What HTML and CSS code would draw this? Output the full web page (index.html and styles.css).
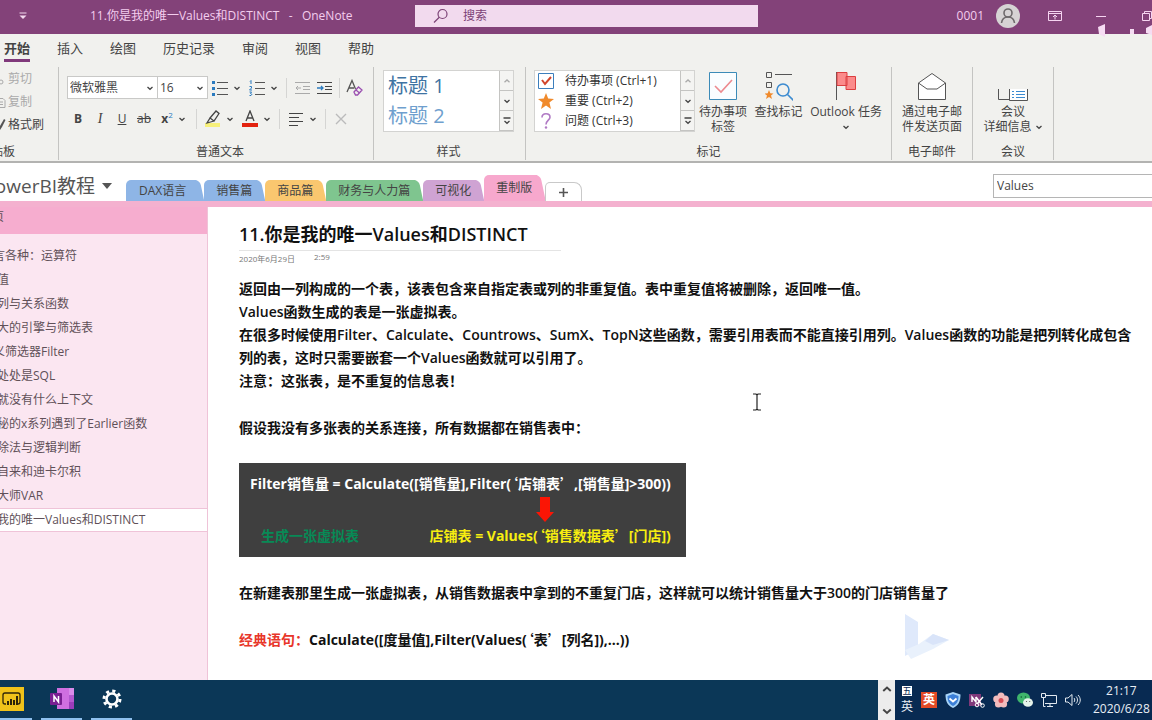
FILE: index.html
```html
<!DOCTYPE html>
<html lang="zh-CN">
<head>
    <meta charset="UTF-8">
    <meta name="viewport" content="width=device-width, initial-scale=1.0">
    <title>11.你是我的唯一Values和DISTINCT - OneNote</title>
    <link rel="stylesheet" href="styles.css">
</head>
<body>

    <!-- Shared icons -->
    <svg class="sprite" width="0" height="0" aria-hidden="true">
        <symbol id="chev" viewBox="0 0 8 8"><path d="M1.500 3 4 5.300 6.500 3" fill="none" stroke="currentColor" stroke-width="1.300"/></symbol>
        <symbol id="chev-up" viewBox="0 0 8 8"><path d="M1.500 5.300 4 3 6.500 5.300" fill="none" stroke="currentColor" stroke-width="1.300"/></symbol>
        <symbol id="more" viewBox="0 0 8 8"><path d="M.5 1h7M1.500 4 4 6.300 6.500 4" fill="none" stroke="currentColor" stroke-width="1.300"/></symbol>
    </svg>

    <header class="titlebar">
        <button class="quick" aria-label="自定义快速访问工具栏">
            <svg width="10" height="8" viewBox="0 0 10 8"><path d="M1.500 1h7" stroke="#f3d9ef"/><path d="M1.500 3.500h7L5 7z" fill="#f3d9ef"/></svg>
        </button>
        <div class="doc-name">11.你是我的唯一Values和DISTINCT &nbsp;&nbsp;-&nbsp;&nbsp; OneNote</div>
        <label class="search">
            <svg width="16" height="16" viewBox="0 0 16 16" fill="none" stroke="#7c4276" stroke-width="1.200"><circle cx="9.500" cy="6" r="4.500"/><path d="M6.300 9.300 1 14.500"/></svg>
            <input type="text" placeholder="搜索" aria-label="搜索">
        </label>
        <div class="account">
            <span>0001</span>
            <svg width="24" height="24" viewBox="0 0 24 24"><circle cx="12" cy="12" r="12" fill="#d6d3d4"/><g fill="none" stroke="#6d696b" stroke-width="1.600"><circle cx="12" cy="9" r="4"/><path d="M5.500 19c.5-4 3-6 6.500-6s6 2 6.500 6"/></g></svg>
        </div>
        <div class="win-buttons">
            <button aria-label="功能区显示选项"><svg width="14" height="12" viewBox="0 0 14 12" fill="none" stroke="#f6d4f1"><path d="M.5 1.500h13v9H.5zM.5 3.500h13M7 9.500V5M5 7l2-2 2 2"/></svg></button>
            <button aria-label="最小化"><svg width="12" height="12" viewBox="0 0 12 12" fill="none" stroke="#f6d4f1"><path d="M1 6.500h10"/></svg></button>
            <button aria-label="还原"><svg width="12" height="12" viewBox="0 0 12 12" fill="none" stroke="#f6d4f1"><path d="M1.500 3.500h7v7h-7zM3.500 3V1.500h7v7H9"/></svg></button>
        </div>
        <svg class="stamp" width="54" height="14" viewBox="0 0 54 14" fill="#f6dcf3"><path d="M0 3 7 0v13l-6-3zM32 5h4v5h-4zM48 4l6-3v10l-6-2z"/></svg>
    </header>

    <nav class="menu">
        <a href="#" class="active">开始</a>
        <a href="#">插入</a>
        <a href="#">绘图</a>
        <a href="#">历史记录</a>
        <a href="#">审阅</a>
        <a href="#">视图</a>
        <a href="#">帮助</a>
    </nav>

    <section class="ribbon">
        <div class="group clipboard">
            <div class="tools">
                <button disabled><svg width="6" height="14" viewBox="0 0 6 14"><circle cx="1" cy="10" r="2" fill="none" stroke="#aaa"/></svg>剪切</button>
                <button disabled><svg width="6" height="14" viewBox="0 0 6 14" fill="none" stroke="#aaa"><path d="M0 3.500h3l2 2v7H0M0 7h3M0 9.500h3"/></svg>复制</button>
                <button><svg width="6" height="14" viewBox="0 0 6 14"><path d="M0 8 4 1l1.500 1L2 9l-2 3z" fill="#555"/></svg>格式刷</button>
            </div>
            <div class="caption">剪贴板</div>
        </div>

        <div class="group font">
            <div class="tools">
                <div class="row">
                    <span class="picker family"><select aria-label="字体"><option>微软雅黑</option></select><svg width="8" height="8"><use href="#chev"/></svg></span>
                    <span class="picker size"><select aria-label="字号"><option>16</option></select><svg width="8" height="8"><use href="#chev"/></svg></span>
                    <button class="split" aria-label="项目符号">
                        <svg width="16" height="16" viewBox="0 0 16 16"><path d="M5 2.500h11M5 8.500h11M5 14.500h11" stroke="#555"/><path d="M0 1h3v3H0zM0 7h3v3H0zM0 13h3v3H0z" fill="#2b7bbf"/></svg>
                        <svg width="8" height="8"><use href="#chev"/></svg>
                    </button>
                    <button class="split" aria-label="编号">
                        <svg width="16" height="16" viewBox="0 0 16 16" fill="none"><path d="M6 2.500h10M6 8.500h10M6 14.500h10" stroke="#555"/><path d="M1 1.500 2 .5V4M.5 6.500h2v1.500L.5 10h2.500M.5 12h2l-1 1.500 1.500 1-1 1H.5" stroke="#2b7bbf"/></svg>
                        <svg width="8" height="8"><use href="#chev"/></svg>
                    </button>
                    <i class="rule"></i>
                    <button class="tool" aria-label="减少缩进" disabled><svg width="15" height="14" viewBox="0 0 15 14" fill="none" stroke="#aaa"><path d="M0 1.500h15M8 5.500h7M8 8.500h7M0 12.500h15M6 7H1M3 5 1 7l2 2"/></svg></button>
                    <button class="tool" aria-label="增加缩进"><svg width="15" height="14" viewBox="0 0 15 14" fill="none" stroke="#444"><path d="M0 1.500h15M8 5.500h7M8 8.500h7M0 12.500h15"/><path d="M0 7h6M4 5l2 2-2 2" stroke="#2b7bbf" stroke-width="1.300"/></svg></button>
                    <i class="rule"></i>
                    <button class="tool" aria-label="清除格式"><svg width="18" height="18" viewBox="0 0 18 18" fill="none"><path d="M1 13 6 1.500 9.500 10M3 9h5" stroke="#555" stroke-width="1.300"/><path d="m8 13 4.500-5L16 11l-4.500 5H9.500zM10 11l3.500 3" stroke="#9a4fb0" stroke-width="1.300"/></svg></button>
                </div>
                <div class="row">
                    <button class="tool"><b>B</b></button>
                    <button class="tool"><em>I</em></button>
                    <button class="tool"><u>U</u></button>
                    <button class="tool"><s>ab</s></button>
                    <button class="split"><span><b>x</b><sup>2</sup></span><svg width="8" height="8"><use href="#chev"/></svg></button>
                    <i class="rule"></i>
                    <button class="split" aria-label="突出显示">
                        <svg width="16" height="18" viewBox="0 0 16 18"><path d="M0 13h15v4H0z" fill="#f7f07a"/><path d="m5 8 6-7 3 2.500L9 11zM5 8l-3 5 7-2" fill="none" stroke="#444" stroke-width="1.300"/></svg>
                        <svg width="8" height="8"><use href="#chev"/></svg>
                    </button>
                    <button class="split" aria-label="字体颜色">
                        <svg width="16" height="18" viewBox="0 0 16 18"><path d="M0 13h16v4H0z" fill="#e3230f"/><path d="M4 11 8 1l4 10M5.500 8h5" fill="none" stroke="#444" stroke-width="1.300"/></svg>
                        <svg width="8" height="8"><use href="#chev"/></svg>
                    </button>
                    <i class="rule"></i>
                    <button class="split" aria-label="段落对齐">
                        <svg width="15" height="14" viewBox="0 0 15 14" stroke="#444"><path d="M0 1.500h14M0 5.500h10M0 9.500h14M0 13.500h9"/></svg>
                        <svg width="8" height="8"><use href="#chev"/></svg>
                    </button>
                    <i class="rule"></i>
                    <button class="tool" aria-label="删除" disabled><svg width="12" height="12" viewBox="0 0 12 12" stroke="#bbb" stroke-width="1.400"><path d="m1 1 10 10M11 1 1 11"/></svg></button>
                </div>
            </div>
            <div class="caption">普通文本</div>
        </div>

        <div class="group styles">
            <div class="gallery">
                <div class="choices">
                    <button class="h1">标题 1</button>
                    <button class="h2">标题 2</button>
                </div>
                <div class="scroller">
                    <button aria-label="上一行" disabled><svg width="8" height="8"><use href="#chev-up"/></svg></button>
                    <button aria-label="下一行"><svg width="8" height="8"><use href="#chev"/></svg></button>
                    <button aria-label="更多"><svg width="8" height="8"><use href="#more"/></svg></button>
                </div>
            </div>
            <div class="caption">样式</div>
        </div>

        <div class="group tags">
            <div class="tools">
                <div class="gallery">
                    <div class="choices">
                        <button><svg width="16" height="16" viewBox="0 0 16 16" fill="none"><path d="M.5.5h15v15H.5z" fill="#fff" stroke="#3c7ebc"/><path d="m4 7 3 4 6-7" stroke="#d2452a" stroke-width="2"/></svg>待办事项 (Ctrl+1)</button>
                        <button><svg width="16" height="16" viewBox="0 0 16 16"><path d="m8 0 2.200 5.600 5.800.3-4.600 3.700L13 16l-5-3.500L3 16l1.600-6.400L0 5.900l5.800-.3z" fill="#f08a2c"/></svg>重要 (Ctrl+2)</button>
                        <button><svg width="16" height="16" viewBox="0 0 16 16"><path d="M4 4.500C4 2 5.500.8 8 .8s4 1.200 4 3.400C12 7 8 7.500 8 11.500" fill="none" stroke="#b07ac4" stroke-width="1.600"/><circle cx="8" cy="14.500" r="1.200" fill="#b07ac4"/></svg>问题 (Ctrl+3)</button>
                    </div>
                    <div class="scroller">
                        <button aria-label="上一行" disabled><svg width="8" height="8"><use href="#chev-up"/></svg></button>
                        <button aria-label="下一行"><svg width="8" height="8"><use href="#chev"/></svg></button>
                        <button aria-label="更多"><svg width="8" height="8"><use href="#more"/></svg></button>
                    </div>
                </div>
                <div class="tag-buttons">
                    <button class="big"><svg width="28" height="30" viewBox="0 0 28 30" fill="none"><path d="M.5 1.500h27v27H.5z" fill="#fafdff" stroke="#3c8bb8"/><path d="m6 15 6 6L23 9" stroke="#ec8a8f" stroke-width="1.600"/></svg>待办事项<br>标签</button>
                    <button class="big"><svg width="28" height="30" viewBox="0 0 28 30" fill="none"><path d="M1.500 1.500h5v5h-5zM1.500 11.500h5v5h-5zM10 3.500h17" stroke="#555"/><path d="m4 19 1.300 3.200 3.200.3-2.500 2 1 3.500-3-2-3 2 1-3.500-2.500-2 3.200-.3z" fill="#f08a2c"/><circle cx="18" cy="19" r="6" stroke="#3c8bd0" stroke-width="1.600"/><path d="m22.500 23.500 6 6" stroke="#3c8bd0" stroke-width="1.600"/></svg>查找标记</button>
                    <button class="big"><svg width="22" height="30" viewBox="0 0 22 30"><path d="M1.500 1v28" stroke="#555"/><path d="M2 1.500h10v13H2zM11 5.500h9.500v13H11z" fill="#fb8b8b" stroke="#dc3f40"/></svg>Outlook 任务<svg width="8" height="16" viewBox="0 0 8 8"><use href="#chev"/></svg></button>
                </div>
            </div>
            <div class="caption">标记</div>
        </div>

        <div class="group mail">
            <div class="tools">
                <button class="big"><svg width="30" height="30" viewBox="0 0 30 30" fill="#fff" stroke="#555"><path d="M1.500 12 15 2.500 28.500 12v16.500h-27z"/><path d="m1.500 12 8.500 6h10l8.500-6" fill="none"/></svg>通过电子邮<br>件发送页面</button>
            </div>
            <div class="caption">电子邮件</div>
        </div>

        <div class="group meeting">
            <div class="tools">
                <button class="big"><svg width="30" height="30" viewBox="0 0 30 30" fill="none" stroke="#555"><path d="M.5 18v10.500H11"/><path d="M11.500 18v11.500h18V18" fill="#fff"/><path d="M14 20.500h2M14 23.500h2M14 26.500h2M18 20.500h9M18 23.500h9M18 26.500h9" stroke="#3c8bd0"/></svg>会议<br><span>详细信息 <svg width="8" height="8"><use href="#chev"/></svg></span></button>
            </div>
            <div class="caption">会议</div>
        </div>
    </section>

    <div class="sections">
        <button class="notebook"><span>PowerBI教程</span><svg width="10" height="6" viewBox="0 0 10 6"><path d="M0 0h10L5 6z" fill="#555"/></svg></button>
        <nav class="tabs">
            <a href="#" class="blue">DAX语言</a>
            <a href="#" class="blue">销售篇</a>
            <a href="#" class="orange">商品篇</a>
            <a href="#" class="green">财务与人力篇</a>
            <a href="#" class="purple">可视化</a>
            <a href="#" class="pink current">重制版</a>
            <button class="add" aria-label="新建分区"><svg width="9" height="9" viewBox="0 0 9 9" stroke="#555" stroke-width="1.600"><path d="M4.500 0v9M0 4.500h9"/></svg></button>
        </nav>
        <input class="find" type="text" value="Values" aria-label="搜索笔记">
    </div>

    <main class="workspace">
        <aside class="pages">
            <div class="pages-head">页</div>
            <ul>
                <li class="deep"><a href="#">言各种：运算符</a></li>
                <li><a href="#">值</a></li>
                <li><a href="#">列与关系函数</a></li>
                <li><a href="#">大的引擎与筛选表</a></li>
                <li class="deep"><a href="#">义筛选器Filter</a></li>
                <li><a href="#">处处是SQL</a></li>
                <li><a href="#">就没有什么上下文</a></li>
                <li><a href="#">秘的x系列遇到了Earlier函数</a></li>
                <li><a href="#">除法与逻辑判断</a></li>
                <li><a href="#">自来和迪卡尔积</a></li>
                <li><a href="#">大师VAR</a></li>
                <li class="selected"><a href="#">我的唯一Values和DISTINCT</a></li>
            </ul>
        </aside>

        <article class="note">
            <h1>11.你是我的唯一Values和DISTINCT</h1>
            <div class="stamp-row"><span>2020年6月29日</span><time>2:59</time></div>

            <p>返回由一列构成的一个表，该表包含来自指定表或列的非重复值。表中重复值将被删除，返回唯一值。</p>
            <p>Values函数生成的表是一张虚拟表。</p>
            <p>在很多时候使用Filter、Calculate、Countrows、SumX、TopN这些函数，需要引用表而不能直接引用列。Values函数的功能是把列转化成包含<br>列的表，这时只需要嵌套一个Values函数就可以引用了。</p>
            <p>注意：这张表，是不重复的信息表！</p>
            <p class="spaced">假设我没有多张表的关系连接，所有数据都在销售表中：</p>

            <div class="formula">
                <div>Filter销售量 = Calculate([销售量],Filter(<span class="han">‘店铺表’</span>,[销售量]&gt;300))</div>
                <svg width="20" height="25" viewBox="0 0 20 25"><path d="M5 0h10v15h4l-9 10-9-10h4z" fill="#fb1505"/></svg>
                <div class="second">
                    <span class="green-text">生成一张虚拟表</span>
                    <span class="yellow-text">店铺表 = Values(<span class="han">‘销售数据表’</span>[门店])</span>
                </div>
            </div>

            <p class="spaced">在新建表那里生成一张虚拟表，从销售数据表中拿到的不重复门店，这样就可以统计销售量大于300的门店销售量了</p>
            <p class="spaced syntax"><span class="red-text">经典语句：</span>Calculate([度量值],Filter(Values(<span class="han">‘表’</span>[列名]),...))</p>

            <svg class="cursor" width="10" height="18" viewBox="0 0 10 18" fill="none" stroke="#222" stroke-width="1.200"><path d="M1 1h3l1 1 1-1h3M5 2v14M1 17h3l1-1 1 1h3"/></svg>
            <svg class="watermark" width="44" height="46" viewBox="0 0 44 46"><path d="M0 0l13 8v27L0 42z" fill="#dfe9fb"/><path d="m0 36 14-6 14-10 16 6-16 9L6 45z" fill="#e9f1fc"/><path d="m28 20 16 6-16 5-8-4z" fill="#d9e4f9"/></svg>
        </article>
    </main>

    <footer class="taskbar">
        <div class="apps">
            <button aria-label="Power BI"><svg width="24" height="24" viewBox="0 0 24 24"><path d="M0 0h24v24H0z" fill="#f0c21a"/><path d="M6 17H5a2 2 0 0 1-2-2V8a2 2 0 0 1 2-2h13a2 2 0 0 1 2 2v7a2 2 0 0 1-2 2" fill="none" stroke="#2d240a" stroke-width="1.300"/><path d="M7 14h2v4H7zM10 12h2v6h-2zM13 13h2v5h-2zM16 9h2v9h-2z" fill="#2d240a"/></svg></button>
            <button aria-label="OneNote"><svg width="24" height="24" viewBox="0 0 24 24"><path d="M7 1h17v21H7z" fill="#cf6fe0"/><path d="M19 1h5v7h-5z" fill="#d98bea"/><path d="M19 8h5v7h-5z" fill="#b457d0"/><path d="M19 15h5v7h-5z" fill="#9a3cbb"/><rect y="6" width="12" height="12" rx="1" fill="#7a1f92"/><path d="M4 15V9l4.500 6V9" fill="none" stroke="#fff" stroke-width="1.500"/></svg></button>
            <button aria-label="设置"><svg width="20" height="20" viewBox="0 0 20 20" fill="none" stroke="#fff"><circle cx="10" cy="10" r="5.500" stroke-width="2.600"/><circle cx="10" cy="10" r="8" stroke-width="3" stroke-dasharray="3.140 3.140"/></svg></button>
        </div>
        <div class="spin">
            <button aria-label="向上"><svg width="12" height="12" viewBox="0 0 8 8"><use href="#chev-up"/></svg></button>
            <button aria-label="向下"><svg width="12" height="12" viewBox="0 0 8 8"><use href="#chev"/></svg></button>
        </div>
        <div class="tray">
            <div class="ime"><span class="box">五</span><span>英</span></div>
            <span class="ime-app">英</span>
            <svg width="16" height="16" viewBox="0 0 16 16"><path d="m8 0 7.500 2.500c0 7-2 11-7.500 13.500C2.500 13.500.5 9.500.5 2.500z" fill="#a9d5f8"/><path d="m8 2 5.500 2c0 5-1.500 8-5.500 10-4-2-5.500-5-5.500-10z" fill="#3b7fd8"/><path d="m4.500 6.500 3.500 3 3.500-3" fill="none" stroke="#fff" stroke-width="1.800"/></svg>
            <svg width="16" height="16" viewBox="0 0 16 16"><path d="M0 2h12v12H0z" fill="#80397b"/><path d="M3 10V5l4 5V5" fill="none" stroke="#fff" stroke-width="1.400"/><path d="m7 5 6 8M14 5l-6 7" stroke="#fff" stroke-width="1.500"/><circle cx="8" cy="13" r="1.800" fill="none" stroke="#fff"/><circle cx="13.500" cy="13.500" r="1.800" fill="none" stroke="#fff"/></svg>
            <svg width="16" height="16" viewBox="0 0 16 16" fill="#f3bcbd"><circle cx="8" cy="4" r="3.500"/><circle cx="12.300" cy="7" r="3.500"/><circle cx="10.600" cy="12" r="3.500"/><circle cx="5.400" cy="12" r="3.500"/><circle cx="3.700" cy="7" r="3.500"/><circle cx="8" cy="8.500" r="2.500" fill="#d84c55"/></svg>
            <svg width="16" height="16" viewBox="0 0 16 16"><ellipse cx="6.500" cy="6" rx="6.500" ry="5.500" fill="#3fb56c"/><ellipse cx="11" cy="10.500" rx="5" ry="4.300" fill="#e6f3ea"/><circle cx="4.300" cy="5" r=".8" fill="#0a5a30"/><circle cx="8.500" cy="5" r=".8" fill="#0a5a30"/><circle cx="9.500" cy="9.500" r=".6" fill="#555"/><circle cx="12.700" cy="9.500" r=".6" fill="#555"/></svg>
            <svg width="16" height="16" viewBox="0 0 16 16" fill="none" stroke="#e2e9f0"><path d="M5 3.500h10.500v8H4M6 14.500h6M9 12v2M.5 1.500h4v4h-4zM2.500 5.500v9h2"/></svg>
            <svg width="16" height="16" viewBox="0 0 16 16" fill="none" stroke="#e2e9f0"><path d="M.5 6v4h2.500l4 3.500v-11L3 6zM9 6c1 1 1 3 0 4M11 4.500c2 2 2 5 0 7M13 3c3 3 3 7 0 10"/></svg>
            <div class="clock"><span>21:17</span><span>2020/6/28</span></div>
        </div>
    </footer>

</body>
</html>
```

FILE: styles.css
```css
* {
    margin: 0;
    padding: 0;
    box-sizing: border-box;
}

body {
    display: flex;
    flex-direction: column;
    height: 100vh;
    overflow: hidden;
    font-family: "Open Sans", "Noto Sans CJK SC", sans-serif;
    font-size: 12px;
    line-height: 16px;
    color: #444;
    background: #fff;
}

button, input, select {
    font: inherit;
    color: inherit;
    background: none;
    border: none;
    outline: none;
}

a {
    color: inherit;
    text-decoration: none;
}

svg {
    flex: none;
}

.sprite {
    position: absolute;
}

/* Title bar */
.titlebar {
    position: relative;
    z-index: 1;
    display: flex;
    align-items: center;
    flex: none;
    height: 34px;
    padding-bottom: 2px;
    background: #834279;
    color: #f3cdee;
}

.quick {
    width: 46px;
    display: flex;
    justify-content: center;
}

.doc-name {
    width: 369px;
    padding-left: 44px;
    white-space: nowrap;
}

.search {
    display: flex;
    align-items: center;
    gap: 14px;
    flex: 1;
    max-width: 343px;
    height: 22px;
    padding-left: 18px;
    background: #f2daee;
}

.search input {
    flex: 1;
    min-width: 0;
}

.search input::placeholder {
    color: #7c4276;
    opacity: 1;
}

.account {
    display: flex;
    align-items: center;
    gap: 12px;
    margin-left: auto;
}

.win-buttons {
    display: flex;
    margin: 0 -18px 0 12px;
}

.win-buttons button {
    display: flex;
    justify-content: center;
    width: 46px;
}

.stamp {
    position: absolute;
    right: 0;
    bottom: -4px;
}

/* Ribbon tabs */
.menu {
    display: flex;
    flex: none;
    gap: 27px;
    height: 30px;
    padding-left: 4px;
    background: #f1f1ee;
    font-size: 13px;
    line-height: 28px;
}

.menu a.active {
    height: 28px;
    font-weight: bold;
    border-bottom: 3px solid #80397b;
}

/* Ribbon */
.ribbon {
    display: flex;
    flex: none;
    height: 99px;
    padding-top: 3px;
    background: #f1f1ee;
    border-bottom: 2px solid #b3b3b1;
}

.group {
    display: flex;
    flex-direction: column;
    justify-content: space-between;
    height: 93px;
    border-right: 1px solid #c4c4c2;
}

.caption {
    text-align: center;
    line-height: 16px;
}

.tools {
    display: flex;
}

.clipboard {
    width: 59px;
}

.clipboard .tools {
    flex-direction: column;
}

.clipboard button {
    display: flex;
    align-items: center;
    gap: 2px;
    height: 23px;
}

.clipboard .caption {
    display: flex;
    justify-content: flex-end;
    width: 15px;
    white-space: nowrap;
}

button:disabled {
    color: #aaa;
}

.font {
    width: 315px;
    padding-left: 8px;
}

.font .tools {
    flex-direction: column;
    gap: 8px;
    padding-top: 9px;
}

.row {
    display: flex;
    align-items: center;
    height: 23px;
}

.picker {
    display: flex;
    align-items: center;
    height: 23px;
    padding-right: 3px;
    background: #fff;
    border: 1px solid #c9c9c7;
}

.picker select {
    appearance: none;
    flex: 1;
    min-width: 0;
    padding-left: 2px;
}

.family {
    width: 91px;
}

.size {
    width: 50px;
    border-left: none;
}

.split {
    display: flex;
    align-items: center;
    justify-content: center;
    gap: 5px;
    width: 37px;
}

.tool {
    display: flex;
    align-items: center;
    justify-content: center;
    width: 22px;
}

.tool em {
    font-family: "Liberation Serif", serif;
    font-size: 14px;
}

.split sup {
    font-size: 8px;
    line-height: 8px;
    color: #2b7bbf;
}

.rule {
    width: 1px;
    height: 20px;
    margin: 0 4px;
    background: #d5d5d3;
}

.gallery {
    display: flex;
    height: 62px;
    margin-top: 3px;
    background: #fff;
    border: 1px solid #d3d3d1;
}

.choices {
    display: flex;
    flex-direction: column;
    flex: 1;
}

.choices button {
    display: flex;
    align-items: center;
    flex: 1;
    gap: 11px;
    color: #333;
    white-space: nowrap;
}

.scroller {
    display: flex;
    flex-direction: column;
    width: 14px;
    background: #f4f4f2;
}

.scroller button {
    display: flex;
    align-items: center;
    justify-content: center;
    flex: 1;
    border: 1px solid #c4c4c2;
    border-width: 0 0 1px 1px;
}

.styles {
    width: 152px;
    padding: 0 11px 0 9px;
}

.styles .choices {
    padding-left: 4px;
}

.styles .choices button {
    font-size: 20px;
}

.styles .choices .h1 {
    color: #3f74a3;
}

.styles .choices .h2 {
    color: #6f9fce;
}

.tags {
    width: 366px;
    padding: 0 8px;
}

.tags .gallery {
    width: 161px;
    padding-left: 3px;
}

.tag-buttons {
    display: flex;
    flex: 1;
    justify-content: space-between;
    padding-left: 3px;
}

.big {
    display: flex;
    flex-direction: column;
    align-items: center;
    align-self: flex-start;
    padding: 4px 1px 0;
    line-height: 15px;
    white-space: nowrap;
}

.big > svg:first-child {
    margin-bottom: 3px;
}

.mail, .meeting {
    width: 81px;
}

.mail .tools, .meeting .tools {
    justify-content: center;
}

/* Notebook and section tabs */
.sections {
    display: flex;
    align-items: flex-end;
    flex: none;
    height: 44px;
    border-bottom: 6px solid #f4b1cf;
}

.notebook {
    display: flex;
    align-items: center;
    justify-content: flex-end;
    gap: 7px;
    width: 126px;
    height: 30px;
    padding-right: 14px;
    font-size: 19px;
    line-height: 24px;
    color: #555;
    white-space: nowrap;
}

.tabs {
    display: flex;
    align-items: flex-end;
}

.tabs a, .add {
    position: relative;
    z-index: 0;
    display: flex;
    align-items: center;
    height: 21px;
    padding: 0 13px 0 12px;
    white-space: nowrap;
}

/* body of the tab and its slanted right side */
.tabs a::before, .tabs a::after {
    content: "";
    position: absolute;
    z-index: -1;
    top: 0;
    bottom: 0;
    background: var(--tab);
}

.tabs a::before {
    left: 0;
    right: 8px;
    border-radius: 5px 0 0 0;
}

.tabs a::after {
    right: 2px;
    width: 20px;
    border-radius: 0 5px 0 0;
    transform: skewX(12deg);
}

.tabs .blue { --tab: #8eb5e6; }
.tabs .orange { --tab: #fac76f; }
.tabs .green { --tab: #7fc58f; }
.tabs .purple { --tab: #cfa3d3; }
.tabs .pink { --tab: #f7a8cd; }

.tabs a:first-child {
    padding: 0 18px 0 13px;
}

.tabs .current {
    height: 26px;
}

.add {
    justify-content: center;
    width: 37px;
    height: 19px;
    border: 1px solid #c9c9c9;
    border-bottom: none;
    border-radius: 5px 8px 0 0;
}

.find {
    width: 159px;
    height: 24px;
    margin: 0 0 3px auto;
    padding: 0 3px 2px;
    border: 1px solid #b5b5b5;
    border-right: none;
}

/* Page list */
.workspace {
    display: flex;
    flex: 1;
    min-height: 0;
}

.pages {
    width: 208px;
    flex: none;
    overflow: hidden;
    background: #fbe6f1;
    border-right: 1px solid #efc3d8;
    color: #605058;
}

.pages-head {
    height: 27px;
    padding-top: 2px;
    margin-right: -1px;
    margin-bottom: 10px;
    text-indent: -8px;
    background: #f6adcf;
}

.pages ul {
    list-style: none;
}

.pages li {
    height: 24px;
    line-height: 24px;
    text-indent: -3px;
    white-space: nowrap;
}

.pages li.deep {
    text-indent: -7px;
}

.pages li.selected {
    background: #fff;
    border: 1px solid #efc3d8;
    border-width: 1px 0;
    line-height: 22px;
}

/* Note */
.note {
    position: relative;
    flex: 1;
    min-width: 0;
    padding: 15px 20px 0 31px;
    font-size: 14px;
    font-weight: 600;
    line-height: 23px;
    color: #111;
    white-space: nowrap;
}

.note h1 {
    width: 322px;
    height: 29px;
    font-size: 18px;
    font-weight: 600;
    line-height: 25px;
    border-bottom: 1px solid #e4e4e4;
}

.stamp-row {
    display: flex;
    gap: 19px;
    margin-bottom: 10px;
    font-size: 8px;
    font-weight: normal;
    line-height: 16px;
    color: #777;
}

.stamp-row time {
    line-height: 12px;
}

.note .spaced {
    margin-top: 24px;
}

.note .syntax {
    font-weight: bold;
}

.han {
    font-family: "Noto Sans CJK SC", sans-serif;
}

.formula {
    display: flex;
    flex-direction: column;
    width: fit-content;
    height: 94px;
    margin: 24px 0;
    padding: 9px 15px 10px 11px;
    background: #3f3f3f;
    color: #fff;
    font-weight: bold;
}

.formula svg {
    margin: 2px 0 2px 285px;
}

.second {
    display: flex;
    justify-content: space-between;
    padding-left: 11px;
}

.green-text {
    color: #078a56;
}

.yellow-text {
    color: #f7ee10;
}

.red-text {
    color: #e8362a;
}

.cursor {
    position: absolute;
    left: 544px;
    top: 186px;
}

.watermark {
    position: absolute;
    left: 697px;
    bottom: 20px;
}

/* Taskbar */
.taskbar {
    display: flex;
    flex: none;
    height: 40px;
    background: #0b3757;
    color: #e8eef5;
}

.apps {
    display: flex;
    gap: 9px;
    flex: 1;
    margin-left: -9px;
}

.apps button {
    display: flex;
    align-items: center;
    justify-content: center;
    width: 41px;
    border-bottom: 2px solid #8fc0ee;
}

.spin {
    display: flex;
    flex-direction: column;
    justify-content: space-between;
    width: 17px;
    padding: 3px 0;
    background: #ececec;
    color: #444;
}

.spin button {
    display: flex;
    justify-content: center;
}

.tray {
    display: flex;
    align-items: center;
    gap: 8px;
    width: 257px;
    padding-left: 6px;
    background: #082a52;
}

.ime {
    display: flex;
    flex-direction: column;
    align-items: center;
    gap: 3px;
    width: 12px;
}

.ime .box {
    width: 10px;
    font-size: 9px;
    line-height: 10px;
    text-align: center;
    background: #fff;
    color: #082a52;
}

.ime-app {
    width: 16px;
    font-weight: bold;
    text-align: center;
    background: #e24a26;
    color: #fff;
}

.clock {
    display: flex;
    flex-direction: column;
    align-items: center;
    margin-left: 4px;
    line-height: 18px;
    white-space: nowrap;
}
```
